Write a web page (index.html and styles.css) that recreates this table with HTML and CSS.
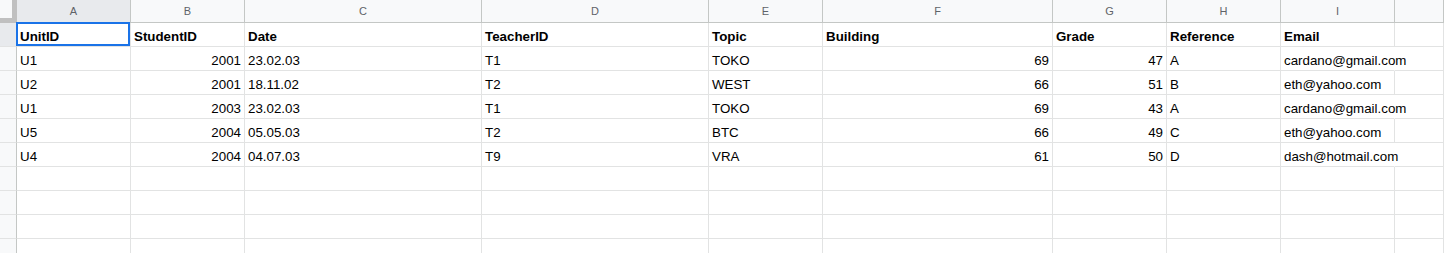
FILE: index.html
```html
<!DOCTYPE html>
<html>
<head>
<meta charset="utf-8">
<link rel="stylesheet" href="styles.css">
</head>
<body>
<div class="sheet">
  <div class="corner"></div>
  <div class="colhead sel">A</div>
  <div class="colhead">B</div>
  <div class="colhead">C</div>
  <div class="colhead">D</div>
  <div class="colhead">E</div>
  <div class="colhead">F</div>
  <div class="colhead">G</div>
  <div class="colhead">H</div>
  <div class="colhead">I</div>
  <div class="colhead"></div>

  <div class="rowhead sel"></div>
  <div class="cell b active">UnitID</div>
  <div class="cell b">StudentID</div>
  <div class="cell b">Date</div>
  <div class="cell b">TeacherID</div>
  <div class="cell b">Topic</div>
  <div class="cell b">Building</div>
  <div class="cell b">Grade</div>
  <div class="cell b">Reference</div>
  <div class="cell b">Email</div>
  <div class="cell"></div>

  <div class="rowhead"></div>
  <div class="cell">U1</div>
  <div class="cell r">2001</div>
  <div class="cell">23.02.03</div>
  <div class="cell">T1</div>
  <div class="cell">TOKO</div>
  <div class="cell r">69</div>
  <div class="cell r">47</div>
  <div class="cell">A</div>
  <div class="cell ov">cardano@gmail.com</div>
  <div class="cell"></div>

  <div class="rowhead"></div>
  <div class="cell">U2</div>
  <div class="cell r">2001</div>
  <div class="cell">18.11.02</div>
  <div class="cell">T2</div>
  <div class="cell">WEST</div>
  <div class="cell r">66</div>
  <div class="cell r">51</div>
  <div class="cell">B</div>
  <div class="cell">eth@yahoo.com</div>
  <div class="cell"></div>

  <div class="rowhead"></div>
  <div class="cell">U1</div>
  <div class="cell r">2003</div>
  <div class="cell">23.02.03</div>
  <div class="cell">T1</div>
  <div class="cell">TOKO</div>
  <div class="cell r">69</div>
  <div class="cell r">43</div>
  <div class="cell">A</div>
  <div class="cell ov">cardano@gmail.com</div>
  <div class="cell"></div>

  <div class="rowhead"></div>
  <div class="cell">U5</div>
  <div class="cell r">2004</div>
  <div class="cell">05.05.03</div>
  <div class="cell">T2</div>
  <div class="cell">BTC</div>
  <div class="cell r">66</div>
  <div class="cell r">49</div>
  <div class="cell">C</div>
  <div class="cell">eth@yahoo.com</div>
  <div class="cell"></div>

  <div class="rowhead"></div>
  <div class="cell">U4</div>
  <div class="cell r">2004</div>
  <div class="cell">04.07.03</div>
  <div class="cell">T9</div>
  <div class="cell">VRA</div>
  <div class="cell r">61</div>
  <div class="cell r">50</div>
  <div class="cell">D</div>
  <div class="cell ov">dash@hotmail.com</div>
  <div class="cell"></div>

  <div class="rowhead"></div>
  <div class="cell"></div><div class="cell"></div><div class="cell"></div><div class="cell"></div><div class="cell"></div>
  <div class="cell"></div><div class="cell"></div><div class="cell"></div><div class="cell"></div><div class="cell"></div>

  <div class="rowhead"></div>
  <div class="cell"></div><div class="cell"></div><div class="cell"></div><div class="cell"></div><div class="cell"></div>
  <div class="cell"></div><div class="cell"></div><div class="cell"></div><div class="cell"></div><div class="cell"></div>

  <div class="rowhead"></div>
  <div class="cell"></div><div class="cell"></div><div class="cell"></div><div class="cell"></div><div class="cell"></div>
  <div class="cell"></div><div class="cell"></div><div class="cell"></div><div class="cell"></div><div class="cell"></div>

  <div class="rowhead"></div>
  <div class="cell"></div><div class="cell"></div><div class="cell"></div><div class="cell"></div><div class="cell"></div>
  <div class="cell"></div><div class="cell"></div><div class="cell"></div><div class="cell"></div><div class="cell"></div>
</div>
</body>
</html>
```

FILE: styles.css
```css
html, body {
  margin: 0;
  padding: 0;
  background: #ffffff;
  overflow: hidden;
}

.sheet {
  display: grid;
  grid-template-columns: 17px 114px 114px 237px 227px 114px 230px 114px 114px 114px 49px;
  grid-template-rows: 23px repeat(10, 24px);
  font-family: "Liberation Sans", Arial, sans-serif;
  font-size: 10pt;
  color: #000000;
}

.corner {
  box-sizing: border-box;
  background: #f8f9fa;
  border-right: 5px solid #c0c0c0;
  border-bottom: 5px solid #c0c0c0;
}

.colhead {
  box-sizing: border-box;
  background: #f8f9fa;
  border-right: 1px solid #c4c7c5;
  border-bottom: 1px solid #c4c7c5;
  color: #5f6368;
  font-size: 11px;
  display: flex;
  align-items: center;
  justify-content: center;
}

.colhead.sel {
  background: #e8eaed;
}

.rowhead {
  box-sizing: border-box;
  background: #f8f9fa;
  border-right: 1px solid #c4c7c5;
  border-bottom: 1px solid #e2e3e3;
}

.rowhead.sel {
  background: #e8eaed;
}

.cell {
  box-sizing: border-box;
  border-right: 1px solid #e2e3e3;
  border-bottom: 1px solid #e2e3e3;
  padding: 0 3px 2px 3px;
  display: flex;
  align-items: flex-end;
  line-height: 15px;
  white-space: nowrap;
  overflow: hidden;
}

.cell.b {
  font-weight: bold;
}

.cell.r {
  justify-content: flex-end;
}

.cell.ov {
  overflow: visible;
  border-right-color: transparent;
}

.cell.active {
  position: relative;
  overflow: visible;
}

.cell.active::after {
  content: "";
  position: absolute;
  top: -1px;
  left: -1px;
  right: 0;
  bottom: 0;
  border: 2px solid #1a73e8;
  pointer-events: none;
}
```
